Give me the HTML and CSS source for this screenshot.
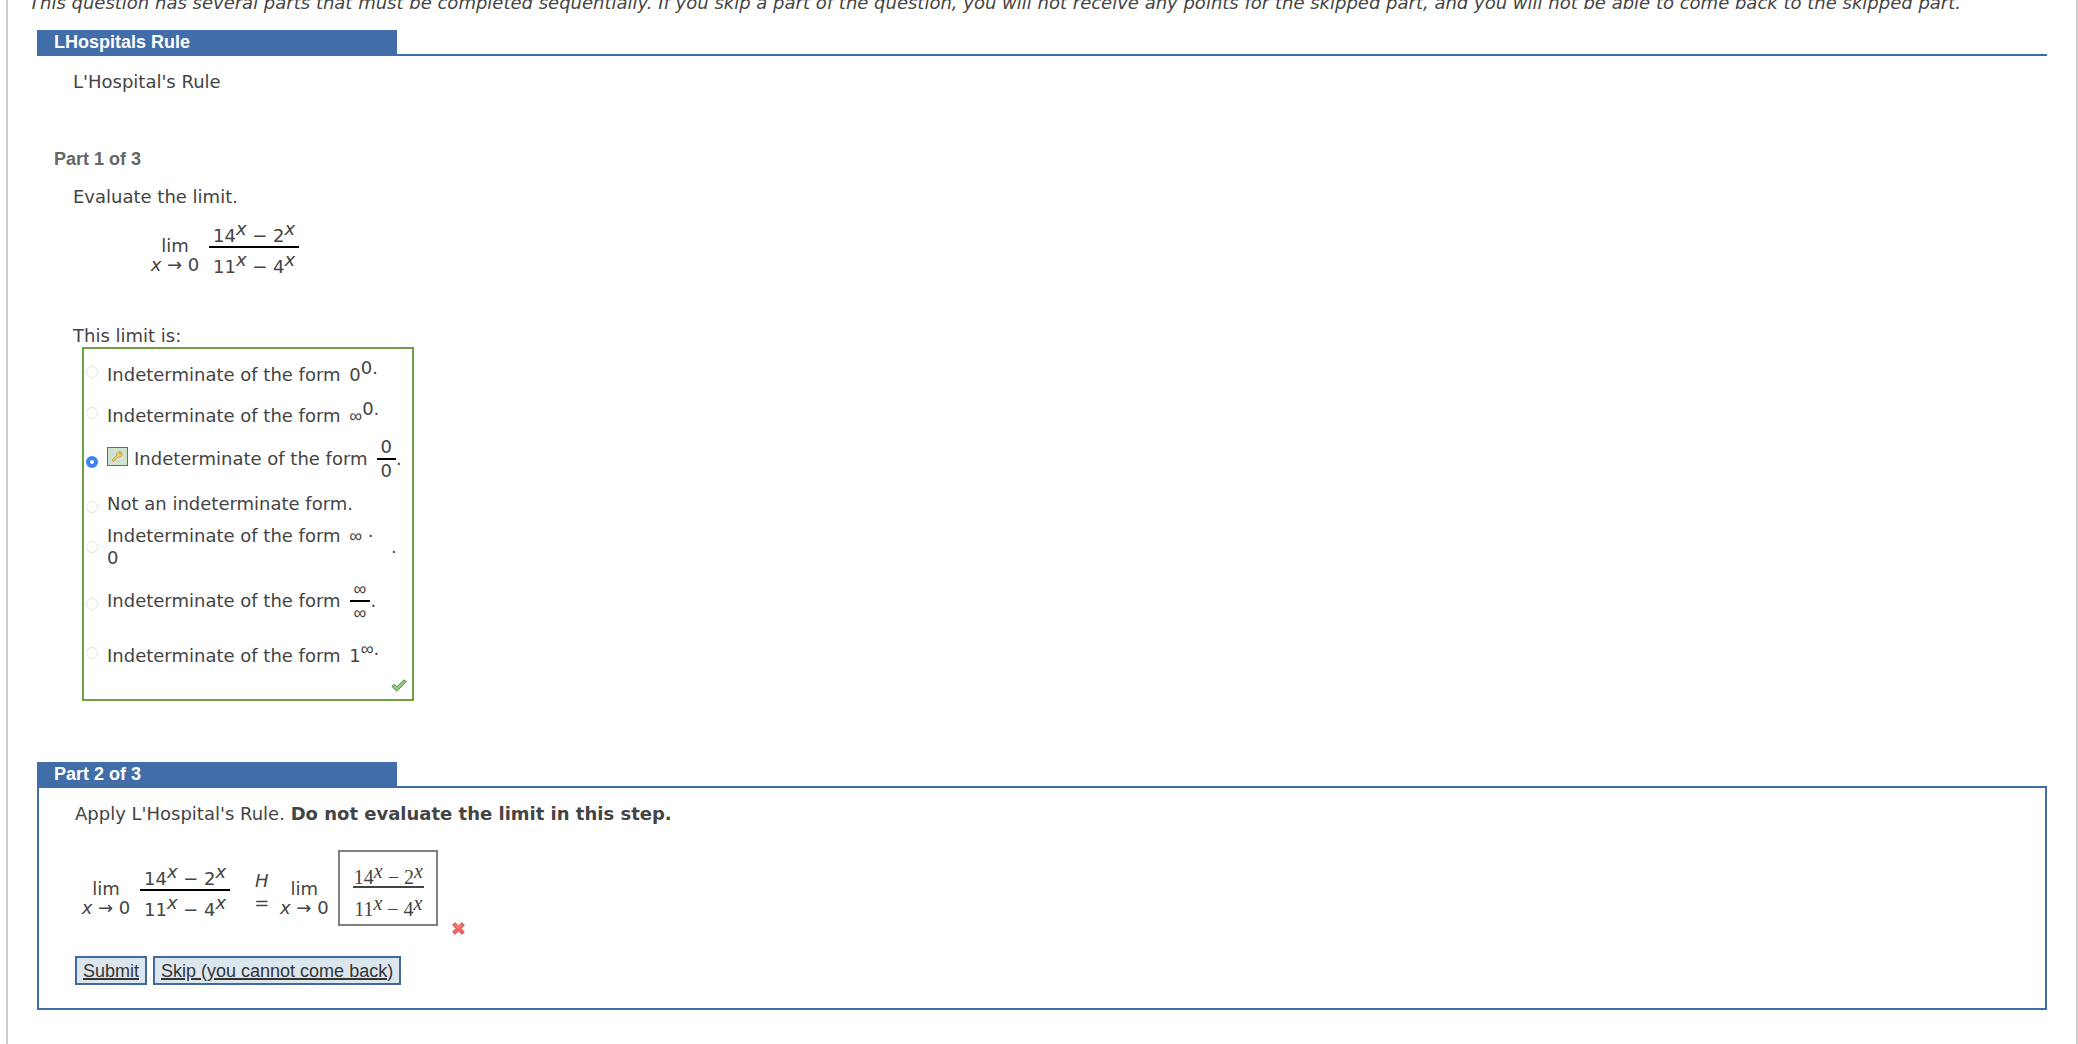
FILE: index.html
```html
<!DOCTYPE html>
<html lang="en">
<head>
<meta charset="utf-8">
<title>LHospitals Rule</title>
<link rel="stylesheet" href="styles.css">
</head>
<body>
<main class="question">
  <p class="notice">This question has several parts that must be completed sequentially. If you skip a part of the question, you will not receive any points for the skipped part, and you will not be able to come back to the skipped part.</p>

  <section class="intro">
    <header class="bar"><h2 class="tab">LHospitals Rule</h2></header>
    <p class="topic">L'Hospital's Rule</p>
  </section>

  <section class="part-one">
    <h3 class="part-title">Part 1 of 3</h3>
    <p class="prompt">Evaluate the limit.</p>
    <div class="math math-first">
      <span class="lim"><span>lim</span><span><i>x</i> → 0</span></span>
      <span class="frac"><span class="num">14<sup><i>x</i></sup> − 2<sup><i>x</i></sup></span><span class="den">11<sup><i>x</i></sup> − 4<sup><i>x</i></sup></span></span>
    </div>
    <p class="prompt" id="limit-label">This limit is:</p>
    <div class="choices" role="radiogroup" aria-labelledby="limit-label">
      <label class="choice raised"><input type="radio" name="form" disabled><span class="text">Indeterminate of the form <span class="term">0<sup>0.</sup></span></span></label>
      <label class="choice raised"><input type="radio" name="form" disabled><span class="text">Indeterminate of the form <span class="term"><span class="inf">∞</span><sup>0.</sup></span></span></label>
      <label class="choice stacked"><input type="radio" name="form" checked>
        <span class="text inline">
          <svg class="key" viewBox="0 0 21 19" aria-hidden="true"><rect x="1" y="1" width="19" height="17" fill="#cfe3d0"/><rect x=".5" y=".5" width="20" height="18" fill="none" stroke="#3f8b35"/><path d="M5.500 12.300 9.700 8.600C9 6.700 10.300 4.800 12.200 4.600c1.900-.200 3.200 1.100 2.900 2.900-.300 1.800-2 2.800-3.800 2.300L8.600 12.200l-.4 1.100-1.100-.1-.3.9H5.300z" fill="#f5cf72" stroke="#c9973c" stroke-width=".8"/><circle cx="13" cy="6.500" r=".7" fill="#a87522"/></svg>
          <span>Indeterminate of the form</span><span class="frac small"><span class="num">0</span><span class="den">0</span></span><span>.</span>
        </span></label>
      <label class="choice plain"><input type="radio" name="form" disabled><span class="text">Not an indeterminate form.</span></label>
      <label class="choice double"><input type="radio" name="form" disabled><span class="text wrap">Indeterminate of the form <span class="term"><span class="inf">∞</span> ·</span> 0</span><span>.</span></label>
      <label class="choice stacked tall"><input type="radio" name="form" disabled>
        <span class="text inline"><span>Indeterminate of the form</span><span class="frac small"><span class="num inf">∞</span><span class="den inf">∞</span></span><span>.</span></span></label>
      <label class="choice raised last"><input type="radio" name="form" disabled><span class="text">Indeterminate of the form <span class="term">1<sup><span class="inf">∞</span>.</sup></span></span></label>
      <svg class="tick" viewBox="0 0 16 13" role="img" aria-label="Correct"><path d="M.8 7.300 3.300 5.300 5.900 7.800 13 .8l2.300 1.700L5.900 12.300z" fill="#7fc06f" stroke="#5a9a50"/><path d="M3 7 6 9.700 13 2.800" fill="none" stroke="#a9dc98"/></svg>
    </div>
  </section>

  <section class="part-two">
    <header class="bar"><h2 class="tab">Part 2 of 3</h2></header>
    <div class="panel">
      <p class="apply">Apply L'Hospital's Rule. <b>Do not evaluate the limit in this step.</b></p>
      <div class="math math-answer">
        <span class="lim"><span>lim</span><span><i>x</i> → 0</span></span>
        <span class="frac"><span class="num">14<sup><i>x</i></sup> − 2<sup><i>x</i></sup></span><span class="den">11<sup><i>x</i></sup> − 4<sup><i>x</i></sup></span></span>
        <span class="hopital"><i>H</i><span>=</span></span>
        <span class="lim"><span>lim</span><span><i>x</i> → 0</span></span>
        <span class="answer" role="textbox" tabindex="0" aria-label="Answer"><span class="frac serif"><span class="num">14<sup><i>x</i></sup> − 2<sup><i>x</i></sup></span><span class="den">11<sup><i>x</i></sup> − 4<sup><i>x</i></sup></span></span></span>
        <svg class="cross" viewBox="0 0 13 13" role="img" aria-label="Incorrect"><path d="M3 .7 6.500 4 10 .7 12.300 3 9 6.500l3.300 3.500L10 12.300 6.500 9 3 12.300.7 10 4 6.500.7 3z" fill="#ef6a66" stroke="#d9423f"/><path d="M3 2.500 6.500 6 10 2.500" fill="none" stroke="#f8a09a"/></svg>
      </div>
      <div class="actions">
        <button type="button">Submit</button>
        <button type="button">Skip (you cannot come back)</button>
      </div>
    </div>
  </section>
</main>
</body>
</html>
```
FILE: styles.css
```css
* { box-sizing: border-box; }

body {
  margin: 0;
  background: #fff;
  color: #444;
  font: 18px/22px Verdana, "DejaVu Sans", sans-serif;
}

p, h2, h3 { margin: 0; }

.question {
  min-height: 100vh;
  margin-left: 6px;
  padding: 0 29px;
  border: solid #ccc;
  border-width: 0 2px;
  overflow: hidden;
}

.notice {
  margin: -8px -24px 16px -8px;
  font-style: italic;
  white-space: nowrap;
}

.bar { border-bottom: 2px solid #416ea8; }

.tab {
  width: 360px;
  height: 24px;
  padding-left: 17px;
  background: #416ea8;
  color: #fff;
  font: bold 18px/24px "Liberation Sans", Arial, sans-serif;
}

.topic { padding: 15px 0 0 36px; }

.part-one { padding-top: 55px; }

.part-title {
  padding-left: 17px;
  color: #666;
  font: bold 18px/22px "Liberation Sans", Arial, sans-serif;
}

.part-one .prompt { padding: 16px 0 0 36px; }

/* Math */
.math { display: flex; align-items: flex-start; }
.math-first { margin: 9px 0 31px 112px; }

sup {
  font-size: inherit;
  line-height: 0;
  vertical-align: 7px;
}

.inf { font-family: "Liberation Sans", Arial, sans-serif; }

.lim {
  display: flex;
  flex-direction: column;
  align-items: center;
  width: 52px;
  margin-top: 19px;
  line-height: 19px;
  white-space: nowrap;
}

.frac {
  display: inline-flex;
  flex-direction: column;
  text-align: center;
  white-space: nowrap;
}

.math .frac { margin-left: 8px; }
.frac .num { padding: 8px 4px 0; border-bottom: 2px solid #000; line-height: 21px; }
.frac .den { padding: 8px 4px 0; }

.frac.small .num,
.frac.small .den { padding: 0 4px; line-height: 22px; }

/* Choices */
.choices {
  width: 332px;
  margin-left: 45px;
  padding: 2px 5px 7px 2px;
  border: 2px solid #6f9f46;
}

.choice { display: flex; align-items: center; gap: 9px; }
.choice .text { white-space: nowrap; }
.term { margin-left: 3px; }
.raised { height: 41px; }
.raised .text { padding-top: 6px; }
.stacked { height: 58px; }
.stacked .text { padding-bottom: 6px; }
.plain { height: 32px; }
.plain .text { padding-bottom: 6px; }
.double { height: 48px; }
.choice .wrap { width: 275px; white-space: normal; }
.tall { height: 66px; }
.last { height: 32px; }

.inline { display: flex; align-items: center; }
.inline .frac { margin-left: 9px; }
.key { width: 21px; height: 19px; margin: 0 6px 6px 0; }

input[type="radio"] {
  flex: none;
  width: 12px;
  height: 12px;
  margin: 0;
  appearance: none;
  border: 1px solid #e4e4e4;
  border-radius: 50%;
  background: #fff;
}

input[type="radio"]:checked { border: 4px solid #3b82f7; }

.tick { display: block; width: 16px; height: 13px; margin: 10px 0 0 auto; }

/* Part 2 */
.part-two { padding: 61px 0 34px; }

.panel {
  padding: 15px 36px 23px;
  border: solid #416ea8;
  border-width: 0 2px 2px;
}

.math-answer { margin: 25px 0 21px 5px; }
.math-answer .lim { margin-top: 29px; }
.math-answer .frac { margin-top: 10px; }

.hopital {
  display: flex;
  flex-direction: column;
  align-items: center;
  margin: 20px 9px 0 24px;
  line-height: 22px;
}

.answer {
  width: 100px;
  height: 76px;
  margin-left: 8px;
  border: 2px solid #808080;
  text-align: center;
}

.math-answer .serif { margin: 11px 0 0; font: 20px/22px "Liberation Serif", "Times New Roman", serif; }
.serif .num { padding: 5px 1px 0; border-color: #444; line-height: 18px; }
.serif .den { padding: 10px 1px 0; }
.serif sup { vertical-align: 6px; }

.cross { width: 13px; height: 13px; margin: 72px 0 0 14px; }

.actions { display: flex; gap: 6px; }

button {
  height: 29px;
  padding: 0 6px;
  border: 2px solid #42699f;
  background: #dce6ee;
  color: #333;
  font: 18px/22px "Liberation Sans", Arial, sans-serif;
  text-decoration: underline 2px;
}
```
